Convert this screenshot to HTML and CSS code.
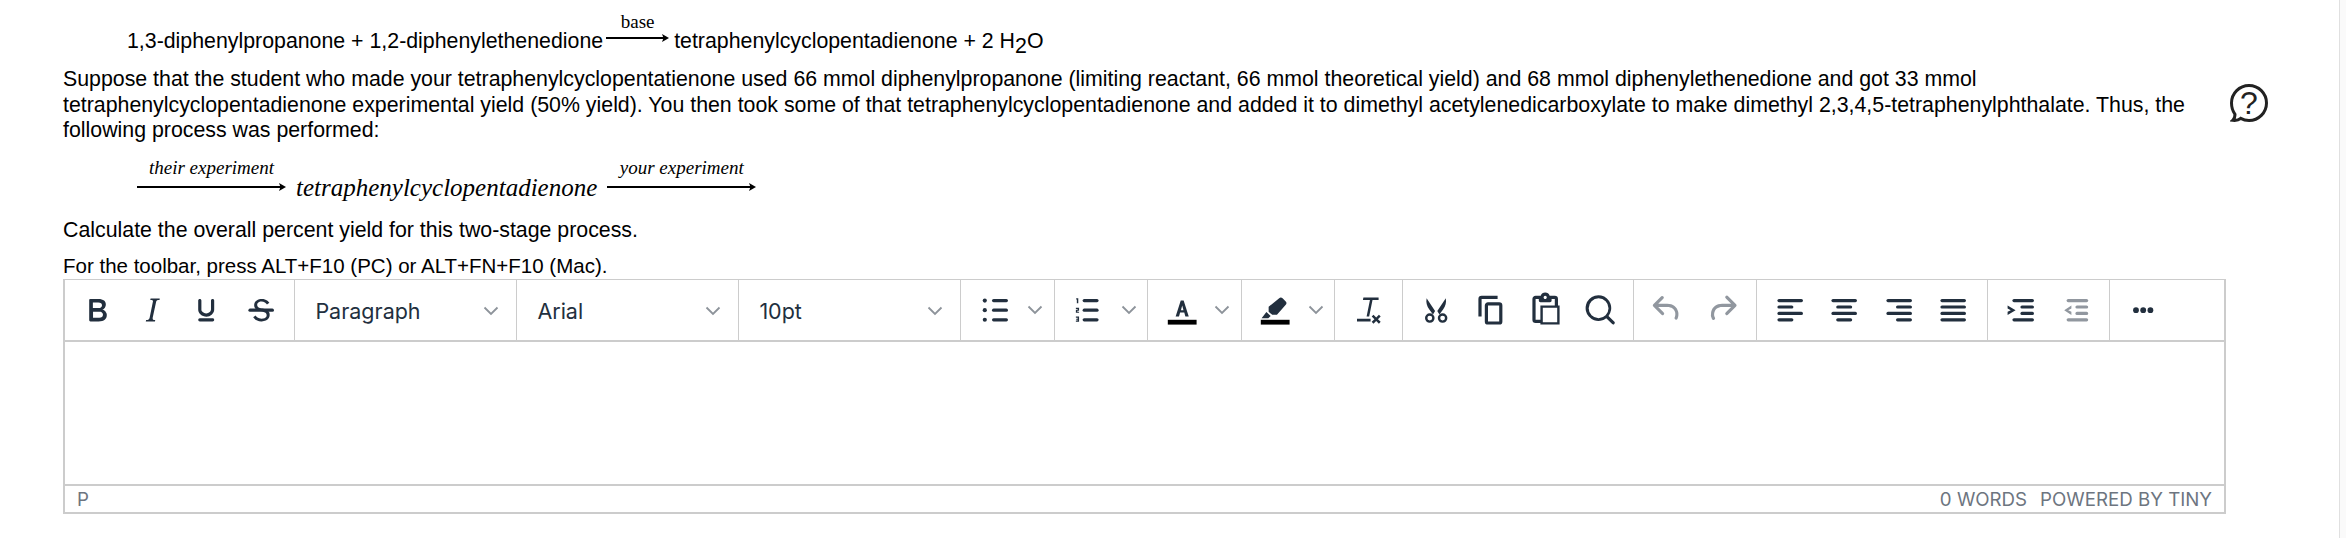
FILE: index.html
```html
<!DOCTYPE html>
<html lang="en">
<head>
    <meta charset="UTF-8">
    <title>Percent yield question</title>
    <link rel="stylesheet" href="styles.css">
</head>
<body>
    <svg class="sprite" width="0" height="0">
        <symbol id="chev" viewBox="0 0 16 10"><path d="M1.500 1.500L8 8l6.500-6.500" fill="none" stroke="currentColor" stroke-width="1.800"/></symbol>
        <symbol id="arrow" viewBox="0 0 150 8" preserveAspectRatio="xMaxYMid slice"><path d="M0 4h146" stroke="#000" stroke-width="2"/><path d="M143 0l7 4-7 4 1.500-4z" fill="#000"/></symbol>
    </svg>

    <div class="page">
        <main class="question">
            <div class="reaction">
                <span>1,3-diphenylpropanone + 1,2-diphenylethenedione</span>
                <span class="step">
                    <span class="step-label">base</span>
                    <svg class="arrow arrow-short"><use href="#arrow"/></svg>
                </span>
                <span class="product">tetraphenylcyclopentadienone + 2 H<sub>2</sub>O</span>
            </div>

            <div class="intro">
                <p>Suppose that the student who made your tetraphenylcyclopentatienone used 66 mmol diphenylpropanone (limiting reactant, 66 mmol theoretical yield) and 68 mmol diphenylethenedione and got 33 mmol tetraphenylcyclopentadienone experimental yield (50% yield). You then took some of that tetraphenylcyclopentadienone and added it to dimethyl acetylenedicarboxylate to make dimethyl 2,3,4,5-tetraphenylphthalate. Thus, the following process was performed:</p>
                <svg class="help" viewBox="0 0 38 38">
                    <path d="M19 1.500c9.600 0 17.500 7.800 17.500 17.500S28.600 36.500 19 36.500c-3 0-5.800-.7-8.300-2.100-1.600 1.400-4.700 2.300-8 1.900 1.500-1.300 2.300-3.300 2.300-6C2.800 27.200 1.500 23.300 1.500 19 1.500 9.300 9.400 1.500 19 1.500z" fill="none" stroke="#222" stroke-width="3"/>
                    <text x="19" y="30" text-anchor="middle" class="help-mark">?</text>
                </svg>
            </div>

            <div class="process">
                <span class="step step-long">
                    <span class="step-label">their experiment</span>
                    <svg class="arrow arrow-long"><use href="#arrow"/></svg>
                </span>
                <span class="process-mid">tetraphenylcyclopentadienone</span>
                <span class="step step-long">
                    <span class="step-label">your experiment</span>
                    <svg class="arrow arrow-long"><use href="#arrow"/></svg>
                </span>
            </div>

            <p class="ask">Calculate the overall percent yield for this two-stage process.</p>
            <p class="hint">For the toolbar, press ALT+F10 (PC) or ALT+FN+F10 (Mac).</p>

            <div class="editor">
                <div class="toolbar">
                    <div class="group">
                        <button class="btn"><svg viewBox="0 0 24 24"><path d="M7.800 19c-.3 0-.5 0-.6-.2l-.2-.5V5.700c0-.2 0-.4.200-.5l.6-.2h5c1.500 0 2.700.3 3.500 1 .7.600 1.100 1.400 1.100 2.500a3 3 0 0 1-.6 1.900c-.4.600-1 1-1.600 1.200.4.100.9.300 1.300.6s.8.700 1 1.200c.4.400.5 1 .5 1.600 0 1.300-.4 2.300-1.300 3-.8.700-2.100 1-3.800 1H7.800zm5-8.300c.6 0 1.200-.1 1.600-.5.4-.3.6-.7.6-1.300 0-1.100-.8-1.700-2.300-1.700H9.300v3.500h3.500zm.5 6c.7 0 1.300-.1 1.700-.4.4-.4.6-.9.6-1.500s-.2-1-.7-1.400c-.4-.3-1-.4-2-.4H9.400v3.700h3.900z"/></svg></button>
                        <button class="btn"><svg viewBox="0 0 24 24"><path d="M16.700 4.700l-.1.900h-.3c-.6 0-1 0-1.400.3-.3.3-.4.600-.5 1.100l-2.100 9.800v.6c0 .5.400.8 1.400.8h.2l-.2.8H8l.2-.8h.2c1.100 0 1.800-.5 2-1.500l2-9.800.1-.5c0-.6-.4-.8-1.400-.8h-.3l.2-.9h5.800z"/></svg></button>
                        <button class="btn"><svg viewBox="0 0 24 24"><path d="M16 5c.6 0 1 .4 1 1v5.500a4 4 0 0 1-.4 1.800l-1 1.400a5.300 5.300 0 0 1-5.500 1 5 5 0 0 1-1.600-1c-.5-.4-.8-.9-1.100-1.400a4 4 0 0 1-.4-1.800V6c0-.6.400-1 1-1s1 .4 1 1v5.500c0 .3 0 .6.200 1l.6.700a3.300 3.300 0 0 0 2.200.8 3.400 3.400 0 0 0 2.200-.8c.3-.2.400-.5.600-.8l.2-.9V6c0-.6.400-1 1-1zM8 17h8c.6 0 1 .4 1 1s-.4 1-1 1H8a1 1 0 0 1 0-2z"/></svg></button>
                        <button class="btn"><svg viewBox="0 0 24 24"><path d="M15.600 8.500c-.5-.7-1-1.100-1.300-1.300-.6-.4-1.300-.6-2-.6-2.700 0-2.800 1.700-2.800 2.100 0 1.600 1.800 2 3.200 2.300 4.400.9 4.600 2.800 4.600 3.900 0 1.400-.7 4.100-5 4.100A6.200 6.200 0 0 1 7 16.400l1.500-1.100c.4.600 1.600 2 3.700 2 1.600 0 2.500-.4 3-1.200.4-.8.3-2-.8-2.600-.7-.4-1.600-.7-2.900-1-1-.2-3.900-.8-3.900-3.600C7.600 6 10.300 5 12.400 5c2.900 0 4.200 1.600 4.700 2.400l-1.500 1.100z"/><path d="M5 11h14a1 1 0 0 1 0 2H5a1 1 0 0 1 0-2z"/></svg></button>
                    </div>
                    <div class="group select"><span>Paragraph</span><svg class="chev"><use href="#chev"/></svg></div>
                    <div class="group select"><span>Arial</span><svg class="chev"><use href="#chev"/></svg></div>
                    <div class="group select"><span>10pt</span><svg class="chev"><use href="#chev"/></svg></div>
                    <div class="group split">
                        <button class="btn"><svg viewBox="0 0 24 24"><circle cx="5.500" cy="6" r="1.300"/><circle cx="5.500" cy="12" r="1.300"/><circle cx="5.500" cy="18" r="1.300"/><rect x="10" y="5" width="10" height="2" rx="1"/><rect x="10" y="11" width="10" height="2" rx="1"/><rect x="10" y="17" width="10" height="2" rx="1"/></svg></button>
                        <svg class="chev"><use href="#chev"/></svg>
                    </div>
                    <div class="group split">
                        <button class="btn"><svg viewBox="0 0 24 24"><path d="M4.500 4.600h1.300v3h-.9V5.300h-.4zM4.300 10.500h2v1.800H5.200v.6h1.100v.7h-2v-1.900h1.100v-.5H4.300zM4.300 16h2v3.200h-2v-.7h1.100v-.6h-.9v-.6h.9v-.6H4.300z"/><rect x="8.500" y="5" width="10" height="2" rx="1"/><rect x="8.500" y="11" width="10" height="2" rx="1"/><rect x="8.500" y="17" width="10" height="2" rx="1"/></svg></button>
                        <svg class="chev"><use href="#chev"/></svg>
                    </div>
                    <div class="group split">
                        <button class="btn"><svg viewBox="0 0 24 24"><path d="M10 16H7.900l3.200-10h1.800l3.200 10H14l-.7-2.500h-2.600zm1.200-4h1.600L12 9z"/><rect x="3" y="18" width="18" height="3" fill="#000"/></svg></button>
                        <svg class="chev"><use href="#chev"/></svg>
                    </div>
                    <div class="group split">
                        <button class="btn"><svg viewBox="0 0 24 24"><path d="M14.500 4.500c.6-.6 1.500-.6 2.100 0l2 2c.6.600.6 1.500 0 2.100l-5.500 6.300h-3l-2.200-2v-3zM6.500 13.200l2.700 2.500-1.500 1.300H3.500z"/><rect x="3" y="18" width="18" height="3" fill="#000"/></svg></button>
                        <svg class="chev"><use href="#chev"/></svg>
                    </div>
                    <div class="group">
                        <button class="btn"><svg viewBox="0 0 24 24"><path d="M9 4h9.500v1.600h-3.800L12.600 16H11l2.100-10.400H8.700zM5 17.400h8.500V19H5zM15.300 14.800l1.700 1.700 1.700-1.700 1.100 1.100-1.700 1.700 1.700 1.700-1.100 1.100-1.700-1.700-1.700 1.700-1.100-1.100 1.700-1.700-1.700-1.700z"/></svg></button>
                    </div>
                    <div class="group">
                        <button class="btn"><svg viewBox="0 0 24 24"><path d="M6 4.500c-.5 2.800.2 5 1.700 7l2.300 3.200 1.300-2.200zM18 4.500c.5 2.800-.2 5-1.700 7L14 14.700l-1.300-2.200z"/><path d="M8 13.900a3 3 0 1 1 0 6 3 3 0 0 1 0-6zm8 0a3 3 0 1 1 0 6 3 3 0 0 1 0-6zm-8 1.500a1.500 1.500 0 1 0 0 3 1.500 1.500 0 0 0 0-3zm8 0a1.500 1.500 0 1 0 0 3 1.500 1.500 0 0 0 0-3z"/></svg></button>
                        <button class="btn"><svg viewBox="0 0 24 24"><path d="M16 3H6a2 2 0 0 0-2 2v11h2V5h10V3zm1 4a2 2 0 0 1 2 2v10a2 2 0 0 1-2 2H10a2 2 0 0 1-2-2V9c0-1.100.9-2 2-2h7zm0 12V9h-7v10h7z"/></svg></button>
                        <button class="btn"><svg viewBox="0 0 24 24"><path d="M18 9V5h-2v1c0 .6-.4 1-1 1H9a1 1 0 0 1-1-1V5H6v13h3V9h9zM9 20H6a2 2 0 0 1-2-2V5c0-1.100.9-2 2-2h3.200A3 3 0 0 1 12 1a3 3 0 0 1 2.800 2H18a2 2 0 0 1 2 2v4h1v12H9v-1zm1.500-9.500v9h9v-9h-9zM12 3a1 1 0 0 0-1 1c0 .5.400 1 1 1s1-.5 1-1-.4-1-1-1z"/></svg></button>
                        <button class="btn"><svg viewBox="0 0 24 24"><path d="M15.800 17a8 8 0 1 1 1.400-1.400l3.700 3.700a1 1 0 0 1-1.400 1.400L15.800 17zM11 17a6.200 6.200 0 1 0 0-12.400A6.200 6.200 0 0 0 11 17z"/></svg></button>
                    </div>
                    <div class="group off">
                        <button class="btn"><svg viewBox="0 0 24 24"><path d="M6.400 8H12c3.700 0 6.200 2 6.900 5.100.3 1.600.1 3-.5 4.400a1 1 0 0 1-1.800-.8c.5-1 .6-2 .4-3.200-.5-2.200-2.200-3.500-5-3.500H6.400l3.300 3.300a1 1 0 1 1-1.400 1.400l-5-5a1 1 0 0 1 0-1.400l5-5a1 1 0 0 1 1.400 1.400L6.400 8z"/></svg></button>
                        <button class="btn"><svg viewBox="0 0 24 24"><path d="M17.600 10H12c-2.800 0-4.400 1.400-4.900 3.500-.3 1.200-.2 2.200.4 3.200a1 1 0 0 1-1.900.8 6.500 6.500 0 0 1-.5-4.400C5.800 10 8.300 8 12 8h5.600l-3.300-3.300a1 1 0 1 1 1.400-1.400l5 5a1 1 0 0 1 0 1.400l-5 5a1 1 0 1 1-1.400-1.400l3.300-3.300z"/></svg></button>
                    </div>
                    <div class="group">
                        <button class="btn"><svg viewBox="0 0 24 24"><rect x="4" y="5" width="16" height="2" rx="1"/><rect x="4" y="9" width="10" height="2" rx="1"/><rect x="4" y="13" width="16" height="2" rx="1"/><rect x="4" y="17" width="10" height="2" rx="1"/></svg></button>
                        <button class="btn"><svg viewBox="0 0 24 24"><rect x="4" y="5" width="16" height="2" rx="1"/><rect x="7" y="9" width="10" height="2" rx="1"/><rect x="4" y="13" width="16" height="2" rx="1"/><rect x="7" y="17" width="10" height="2" rx="1"/></svg></button>
                        <button class="btn"><svg viewBox="0 0 24 24"><rect x="4" y="5" width="16" height="2" rx="1"/><rect x="10" y="9" width="10" height="2" rx="1"/><rect x="4" y="13" width="16" height="2" rx="1"/><rect x="10" y="17" width="10" height="2" rx="1"/></svg></button>
                        <button class="btn"><svg viewBox="0 0 24 24"><rect x="4" y="5" width="16" height="2" rx="1"/><rect x="4" y="9" width="16" height="2" rx="1"/><rect x="4" y="13" width="16" height="2" rx="1"/><rect x="4" y="17" width="16" height="2" rx="1"/></svg></button>
                    </div>
                    <div class="group">
                        <button class="btn"><svg viewBox="0 0 24 24"><rect x="6.500" y="5" width="13.500" height="2" rx="1"/><rect x="11.500" y="9" width="8.500" height="2" rx="1"/><rect x="11.500" y="13" width="8.500" height="2" rx="1"/><rect x="6.500" y="17" width="13.500" height="2" rx="1"/><path d="M3.500 9l5 3-5 3v-2l2-1-2-1z"/></svg></button>
                        <button class="btn btn-off"><svg viewBox="0 0 24 24"><rect x="6" y="5" width="13.500" height="2" rx="1"/><rect x="11.500" y="9" width="8" height="2" rx="1"/><rect x="11.500" y="13" width="8" height="2" rx="1"/><rect x="6" y="17" width="13.500" height="2" rx="1"/><path d="M9 9l-4.500 3L9 15v-2l-2-1 2-1z"/></svg></button>
                    </div>
                    <div class="group group-last">
                        <button class="btn"><svg viewBox="0 0 24 24"><circle cx="7.500" cy="12" r="1.800"/><circle cx="12" cy="12" r="1.800"/><circle cx="16.500" cy="12" r="1.800"/></svg></button>
                    </div>
                </div>
                <div class="editor-body"></div>
                <div class="statusbar">
                    <span>P</span>
                    <span class="status-right"><span>0 WORDS</span><span>POWERED BY TINY</span></span>
                </div>
            </div>
        </main>
        <div class="scrolltrack"></div>
    </div>
</body>
</html>
```

FILE: styles.css
```css
body {
    margin: 0;
    background-color: #fff;
    color: #000;
    font-family: "Liberation Sans", Arial, sans-serif;
    font-size: 21.330px;
}
p {
    margin: 0;
}
.sprite {
    display: block;
    height: 0;
}
.page {
    display: flex;
    height: 538px;
    overflow: hidden;
}
.question {
    flex: 1;
    min-width: 0;
    padding-left: 63px;
}
.scrolltrack {
    width: 6px;
    background-color: #fafafa;
    border-left: 1px solid #e0e0e0;
}

/* reaction lines */
.reaction {
    display: flex;
    align-items: flex-end;
    height: 54px;
    padding-left: 64px;
    line-height: 26px;
}
.reaction sub {
    font-size: 21.330px;
    line-height: 0;
    vertical-align: -5px;
}
.step {
    display: flex;
    flex-direction: column;
    align-items: center;
    margin-left: 3px;
    font-family: "Liberation Serif", "Times New Roman", serif;
    font-size: 19px;
}
.step-label {
    line-height: 20px;
}
.arrow {
    display: block;
    height: 8px;
}
.arrow-short {
    width: 63px;
    margin-top: 2px;
    margin-bottom: 12px;
}
.product {
    margin-left: 5px;
}
.intro {
    display: flex;
    align-items: center;
    margin-top: 13px;
}
.intro p {
    width: 2163px;
    line-height: 25.600px;
}
.help {
    flex: none;
    width: 38px;
    height: 38px;
    margin: 0 0 5px 4px;
}
.help-mark {
    font-size: 32px;
    fill: #222;
}
.process {
    display: flex;
    align-items: flex-end;
    height: 56px;
    margin-top: 6px;
    padding-left: 74px;
    font-family: "Liberation Serif", "Times New Roman", serif;
    font-style: italic;
}
.step-long {
    margin-left: 0;
}
.arrow-long {
    width: 149px;
    margin-top: 5px;
    margin-bottom: 15px;
}
.process-mid {
    margin: 0 10px 3px;
    font-size: 25px;
    line-height: 30px;
}
.ask {
    margin-top: 11px;
    line-height: 26px;
}
.hint {
    margin-top: 10px;
    font-size: 20.500px;
    line-height: 26px;
}

/* editor */
.editor {
    display: flex;
    flex-direction: column;
    width: 2163px;
    height: 235px;
    border: 2px solid #ccc;
    border-width: 1px 2px 2px;
    font-family: Inter, "Noto Sans", sans-serif;
    color: #222f3e;
    box-sizing: border-box;
}
.toolbar {
    display: flex;
    height: 62px;
    border-bottom: 2px solid #ccc;
    box-sizing: border-box;
}
.group {
    display: flex;
    align-items: center;
    padding: 0 6px;
    border-right: 1px solid #ccc;
    box-sizing: border-box;
}
.group:first-child {
    padding-left: 5px;
}
.group-last {
    border-right: none;
}
.btn {
    display: flex;
    align-items: center;
    justify-content: center;
    width: 54.600px;
    height: 60px;
    padding: 0;
    border: none;
    background: none;
    color: inherit;
}
.btn svg {
    flex: none;
    width: 38.400px;
    height: 38.400px;
    fill: #222f3e;
}
.off .btn svg,
.btn-off svg {
    fill: #91979f;
}
.chev {
    flex: none;
    width: 16px;
    height: 10px;
    color: #8d939a;
}
.select {
    justify-content: space-between;
    width: 222px;
    padding: 2px 17px 0 20px;
    font-size: 21.500px;
}
.split {
    padding-right: 10.500px;
}
.split .btn {
    width: 55px;
}
.split .chev {
    margin-left: 5px;
}
.editor-body {
    flex: 1;
    border-bottom: 2px solid #ccc;
}
.statusbar {
    display: flex;
    justify-content: space-between;
    align-items: center;
    height: 26px;
    padding: 1px 12px 0;
    font-size: 18.700px;
    color: #6d7580;
    box-sizing: border-box;
}
.status-right {
    display: flex;
    gap: 13px;
}
```
